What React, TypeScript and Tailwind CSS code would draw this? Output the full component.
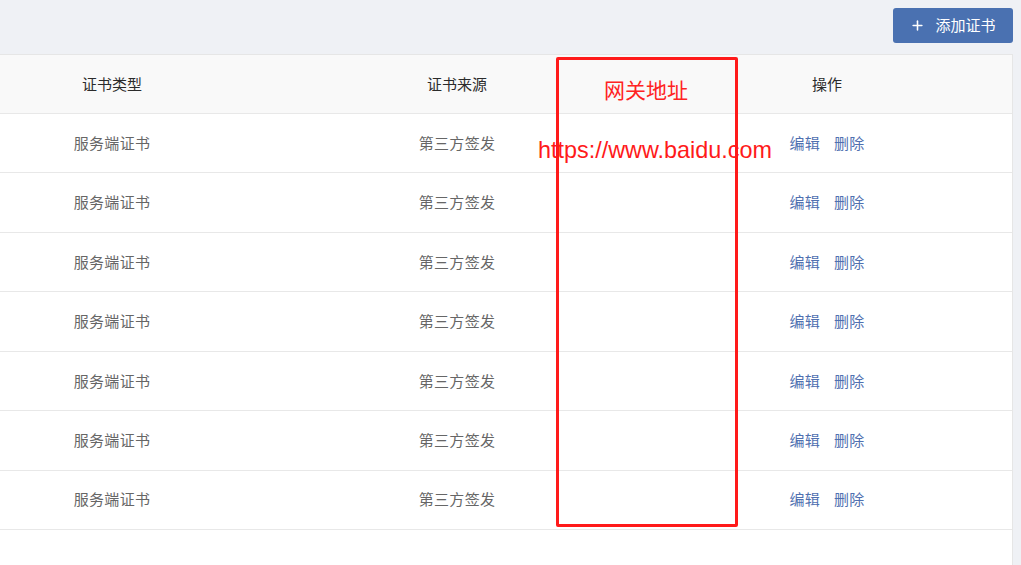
import { Plus } from "lucide-react";

const rows = Array.from({ length: 7 }, (_, i) => ({
  id: i + 1,
  type: "服务端证书",
  source: "第三方签发",
}));

const font = "font-['Microsoft_YaHei','Noto_Sans_CJK_SC',sans-serif]";

export default function App() {
  return (
    <div className={`relative w-[1021px] h-[565px] overflow-hidden bg-[#eff1f5] ${font}`}>
      {/* toolbar */}
      <div className="flex h-[54px] items-start justify-end pr-2 pt-2">
        <button className="flex h-[35px] w-[120px] items-center justify-center gap-[10px] rounded-[3px] bg-[#4a71b1] text-[15px] text-white">
          <Plus className="h-[15px] w-[15px]" strokeWidth={2.5} />
          <span>添加证书</span>
        </button>
      </div>

      {/* table card */}
      <div className="mr-2 h-[511px] border-r border-t border-[#e6e6e6] bg-white">
        <div className="flex h-[59px] items-center border-b border-[#e8e8e8] bg-[#f9f9f9] text-[15px] text-[#2b2b2b]">
          <div className="w-[224px] text-center">证书类型</div>
          <div className="w-[466px] text-center">证书来源</div>
          <div className="w-[274px] text-center">操作</div>
        </div>
        {rows.map((r) => (
          <div
            key={r.id}
            className="flex h-[59.43px] items-center border-b border-[#e8e8e8] text-[15px] tracking-[0.3px] text-[#666]"
          >
            <div className="w-[224px] text-center">{r.type}</div>
            <div className="w-[466px] text-center">{r.source}</div>
            <div className="flex w-[274px] justify-center gap-[14px] text-[#4f70b0]">
              <span>编辑</span>
              <span>删除</span>
            </div>
          </div>
        ))}
      </div>

      {/* red annotation overlay */}
      <div className="pointer-events-none absolute left-[556px] top-[57px] h-[470px] w-[182px] rounded-[2px] border-[3px] border-[#ff1a1a]" />
      <div className="pointer-events-none absolute left-[555px] top-[74px] w-[182px] text-center text-[21px] leading-[30px] text-[#ff2222]">
        网关地址
      </div>
      <div className="pointer-events-none absolute left-[538px] top-[135px] font-['Liberation_Sans',Arial,sans-serif] text-[23.4px] leading-[30px] text-[#ff1a1a]">
        https://www.baidu.com
      </div>
    </div>
  );
}
